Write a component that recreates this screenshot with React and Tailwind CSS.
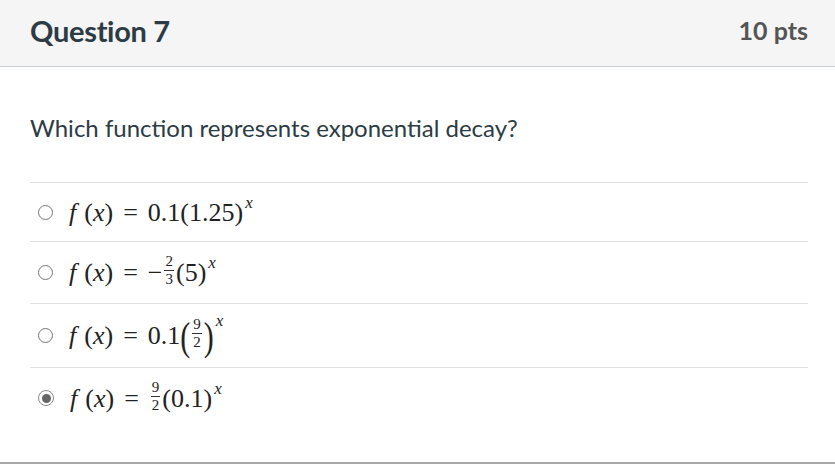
import React from 'react';

const Frac = ({ n, d }) => (
  <span className="inline-flex flex-col items-center mx-[2px] text-[15px] leading-[15px] relative -top-[2px]">
    <span className="px-[1px] pb-[1px]">{n}</span>
    <span className="w-full border-t border-[#333]" />
    <span className="px-[1px] pt-[1px]">{d}</span>
  </span>
);

const Sup = ({ up = 'top-[-10px]' }) => (
  <span className={`italic text-[17px] leading-none relative ${up} ml-[2px]`}>x</span>
);

const Fx = () => (
  <>
    <span className="italic">f</span>
    <span className="ml-[8px]">(</span>
    <span className="italic">x</span>
    <span>)</span>
    <span className="mx-[10px]">=</span>
  </>
);

const options = [
  {
    h: 'h-[59px]',
    expr: (
      <>
        <Fx />0.1(1.25)<Sup />
      </>
    ),
  },
  {
    h: 'h-[62px]',
    expr: (
      <>
        <Fx />−<Frac n="2" d="3" />(5)<Sup />
      </>
    ),
  },
  {
    h: 'h-[64px]',
    expr: (
      <>
        <Fx />0.1<span className="text-[30px] leading-none inline-block scale-y-[1.35]">(</span>
        <Frac n="9" d="2" />
        <span className="text-[30px] leading-none inline-block scale-y-[1.35]">)</span>
        <Sup up="top-[-15px]" />
      </>
    ),
  },
  {
    h: 'h-[60px]',
    checked: true,
    expr: (
      <>
        <Fx />
        <Frac n="9" d="2" />(0.1)<Sup />
      </>
    ),
  },
];

const Radio = ({ checked }) =>
  checked ? (
    <span className="w-[16px] h-[16px] rounded-full border-[1.5px] border-[#8a8a8a] bg-white shrink-0 flex items-center justify-center">
      <span className="w-[9px] h-[9px] rounded-full bg-[#666]" />
    </span>
  ) : (
    <span className="w-[15px] h-[15px] rounded-full border-[1.5px] border-[#767676] bg-white shrink-0" />
  );

export default function App() {
  return (
    <div className="w-[835px] h-[471px] bg-white font-['Lato','Noto_Sans',sans-serif] text-[#2d3b45] overflow-hidden">
      <div className="h-[67px] bg-[#f5f5f5] border-b border-[#c7cdd1] flex items-center justify-between pl-[30px] pr-[27px]">
        <h2 className="text-[29px] font-bold tracking-[-0.3px] pb-[4px]">Question 7</h2>
        <span className="text-[25px] font-bold text-[#545454] pb-[4px]">10 pts</span>
      </div>
      <div className="pl-[30px] pr-[27px]">
        <p className="text-[24px] pt-[46px] pb-[39px] leading-[30px]">Which function represents exponential decay?</p>
        <div className="border-t border-[#dfe2e4]">
          {options.map((o, i) => (
            <div
              key={i}
              className={`${o.h} flex items-center gap-[16px] pl-[8px] ${i < 3 ? 'border-b border-[#dfe2e4]' : ''}`}
            >
              <Radio checked={o.checked} />
              <span className="font-['Liberation_Serif','DejaVu_Serif',serif] text-[26px] text-[#222] flex items-center">
                {o.expr}
              </span>
            </div>
          ))}
        </div>
      </div>
      <div className="mt-[34px] border-t-2 border-[#a7a7a7]" />
    </div>
  );
}
